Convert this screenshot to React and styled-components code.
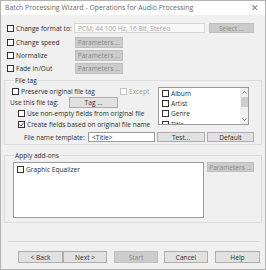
import React from "react";
import styled, { createGlobalStyle } from "styled-components";

const Global = createGlobalStyle`
  html, body { margin: 0; padding: 0; background: #f0f0f0; }
  body { font-family: "Open Sans", "Noto Sans", sans-serif; font-size: 6.6px; color: #2e2e2e; }
  * { box-sizing: border-box; }
`;

const Window = styled.div`
  width: 266px;
  height: 270px;
  background: #f0f0f0;
  border: 1px solid #b4b4b4;
  display: flex;
  flex-direction: column;
  overflow: hidden;
`;

const TitleBar = styled.div`
  height: 14px;
  background: #ffffff;
  display: flex;
  align-items: center;
  justify-content: space-between;
  padding: 0 6px 2px 4px;
  color: #6a6a6a;
  font-size: 6.9px;
`;

const Close = styled.span`
  font-size: 9px;
  color: #7a7a7a;
  line-height: 1;
`;

const Body = styled.div`
  flex: 1;
  display: flex;
  flex-direction: column;
  padding: 0 3px 0 3px;
`;

const Top = styled.div`
  margin-top: 8px;
  padding-left: 3px;
  display: flex;
  flex-direction: column;
  gap: 2px;
`;

const Row = styled.div`
  display: flex;
  align-items: center;
  height: ${(p) => p.$h || 11}px;
  margin-bottom: ${(p) => p.$mb || 0}px;
  margin-top: ${(p) => p.$mt || 0}px;
`;

const LabelCell = styled.div`
  width: ${(p) => p.$w}px;
  display: flex;
  align-items: center;
  flex-shrink: 0;
  padding-left: ${(p) => p.$pl || 0}px;
  color: ${(p) => (p.$disabled ? "#9a9a9a" : "inherit")};
`;

const Box = styled.span`
  width: 7px;
  height: 7px;
  border: 1px solid #333;
  background: #fff;
  margin-right: 2px;
  flex-shrink: 0;
  display: inline-flex;
  align-items: center;
  justify-content: center;
  border-color: ${(p) => (p.$disabled ? "#c4c4c4" : "#333")};
`;

const Check = ({ checked, disabled }) => (
  <Box $disabled={disabled}>
    {checked && (
      <svg width="5" height="5" viewBox="0 0 5 5">
        <path d="M0.5 2.6 L2 4 L4.6 0.8" fill="none" stroke="#222" strokeWidth="0.8" />
      </svg>
    )}
  </Box>
);

const Button = styled.div`
  width: ${(p) => p.$w}px;
  height: ${(p) => p.$h || 11}px;
  margin-left: ${(p) => p.$ml || 0}px;
  flex-shrink: 0;
  display: flex;
  align-items: center;
  justify-content: center;
  background: ${(p) => (p.$disabled ? "#cccccc" : "#e1e1e1")};
  border: 1px solid ${(p) => (p.$disabled ? "#bfbfbf" : "#adadad")};
  color: ${(p) => (p.$disabled ? "#8a8a8a" : "#2e2e2e")};
`;

const Combo = styled.div`
  width: 131px;
  height: 10px;
  background: #f8f8f8;
  border: 1px solid #d6d6d6;
  color: #a6a6a6;
  display: flex;
  align-items: center;
  padding-left: 3px;
`;

const Group = styled.div`
  position: relative;
  border: 1px solid #dcdcdc;
  width: 258px;
  margin-top: ${(p) => p.$mt}px;
  padding: ${(p) => p.$pad};
`;

const Legend = styled.span`
  position: absolute;
  top: -5px;
  left: 9px;
  background: #f0f0f0;
  padding: 0 1px;
  line-height: 9px;
`;

const TagTop = styled.div`
  display: flex;
`;

const LeftCol = styled.div`
  width: 153px;
  padding-left: 5px;
  display: flex;
  flex-direction: column;
`;

const List = styled.div`
  background: #fff;
  border: 1px solid #9a9a9a;
  width: ${(p) => p.$w}px;
  height: ${(p) => p.$h}px;
  margin-top: ${(p) => p.$mt || 0}px;
  display: flex;
  overflow: hidden;
`;

const ListItems = styled.div`
  flex: 1;
  padding: ${(p) => p.$pad};
  display: flex;
  flex-direction: column;
`;

const ListItem = styled.div`
  height: ${(p) => p.$h || 10.3}px;
  display: flex;
  align-items: center;
  flex-shrink: 0;
`;

const Scroll = styled.div`
  width: 8px;
  display: flex;
  flex-direction: column;
  align-items: center;
  background: #f0f0f0;
`;

const Arrow = styled.div`
  height: 9px;
  display: flex;
  align-items: center;
  justify-content: center;
`;

const Thumb = styled.div`
  width: 7px;
  height: 10px;
  background: #cdcdcd;
`;

const Spacer = styled.div`
  flex: 1;
`;

const TextInput = styled.div`
  width: 67px;
  height: 10px;
  background: #fff;
  border: 1px solid #9a9a9a;
  display: flex;
  align-items: center;
  padding-left: 3px;
`;

const AddonsRow = styled.div`
  display: flex;
  align-items: flex-start;
`;

const Separator = styled.div`
  height: 1px;
  background: #d8d8d8;
  margin: 18px 3px 0 4px;
`;

const Footer = styled.div`
  display: flex;
  margin-top: 9px;
  padding-left: 14px;
`;

const Up = () => (
  <svg width="5" height="3" viewBox="0 0 5 3">
    <path d="M0.5 2.5 L2.5 0.5 L4.5 2.5" fill="none" stroke="#606060" strokeWidth="0.8" />
  </svg>
);
const Down = () => (
  <svg width="5" height="3" viewBox="0 0 5 3">
    <path d="M0.5 0.5 L2.5 2.5 L4.5 0.5" fill="none" stroke="#606060" strokeWidth="0.8" />
  </svg>
);

export default function App() {
  return (
    <>
      <Global />
      <Window>
        <TitleBar>
          <span>Batch Processing Wizard - Operations for Audio Processing</span>
          <Close>✕</Close>
        </TitleBar>
        <Body>
          <Top>
            <Row $h={10} $mb={2}>
              <LabelCell $w={67}>
                <Check />
                Change format to:
              </LabelCell>
              <Combo>PCM; 44 100 Hz, 16 Bit, Stereo</Combo>
              <Button $w={45} $h={10} $ml={4} $disabled>
                Select ...
              </Button>
            </Row>
            <Row>
              <LabelCell $w={68}>
                <Check />
                Change speed
              </LabelCell>
              <Button $w={48} $disabled>Parameters ...</Button>
            </Row>
            <Row>
              <LabelCell $w={68}>
                <Check />
                Normalize
              </LabelCell>
              <Button $w={48} $disabled>Parameters ...</Button>
            </Row>
            <Row>
              <LabelCell $w={68}>
                <Check />
                Fade In/Out
              </LabelCell>
              <Button $w={48} $disabled>Parameters ...</Button>
            </Row>
          </Top>

          <Group $mt={6} $pad="5px 0 2px 0">
            <Legend>File tag</Legend>
            <TagTop>
              <LeftCol>
                <Row>
                  <LabelCell $w={110} $pl={2}>
                    <Check />
                    Preserve original file tag
                  </LabelCell>
                  <LabelCell $w={40} $disabled>
                    <Check disabled />
                    Except
                  </LabelCell>
                </Row>
                <Row>
                  <LabelCell $w={59}>Use this file tag:</LabelCell>
                  <Button $w={49} $h={11}>Tag ...</Button>
                </Row>
                <Row>
                  <LabelCell $w={150} $pl={8}>
                    <Check />
                    Use non-empty fields from original file
                  </LabelCell>
                </Row>
                <Row>
                  <LabelCell $w={150} $pl={8}>
                    <Check checked />
                    Create fields based on original file name
                  </LabelCell>
                </Row>
              </LeftCol>
              <List $w={91} $h={38} $mt={1}>
                <ListItems $pad="0 0 0 3px">
                  <ListItem>
                    <Check />
                    Album
                  </ListItem>
                  <ListItem>
                    <Check />
                    Artist
                  </ListItem>
                  <ListItem>
                    <Check />
                    Genre
                  </ListItem>
                  <ListItem>
                    <Check />
                    Title
                  </ListItem>
                </ListItems>
                <Scroll>
                  <Arrow><Up /></Arrow>
                  <Thumb />
                  <Spacer />
                  <Arrow><Down /></Arrow>
                </Scroll>
              </List>
            </TagTop>
            <Row $h={10} $mt={2}>
              <LabelCell $w={83} $pl={19}>File name template:</LabelCell>
              <TextInput>&lt;Title&gt;</TextInput>
              <Button $w={48} $h={10} $ml={2}>Test...</Button>
              <Button $w={47} $h={10} $ml={2}>Default</Button>
            </Row>
          </Group>

          <Group $mt={10} $pad="6px 0 4px 8px">
            <Legend>Apply add-ons</Legend>
            <AddonsRow>
              <List $w={191} $h={56}>
                <ListItems $pad="1px 0 0 3px">
                  <ListItem $h={10}>
                    <Check />
                    Graphic Equalizer
                  </ListItem>
                </ListItems>
              </List>
              <Button $w={47} $h={10} $ml={3} $disabled>Parameters ...</Button>
            </AddonsRow>
          </Group>

          <Separator />

          <Footer>
            <Button $w={45} $h={12}>&lt; Back</Button>
            <Button $w={44} $h={12}>Next &gt;</Button>
            <Button $w={44} $h={12} $ml={7} $disabled>Start</Button>
            <Button $w={44} $h={12} $ml={6}>Cancel</Button>
            <Button $w={45} $h={12} $ml={7}>Help</Button>
          </Footer>
        </Body>
      </Window>
    </>
  );
}
